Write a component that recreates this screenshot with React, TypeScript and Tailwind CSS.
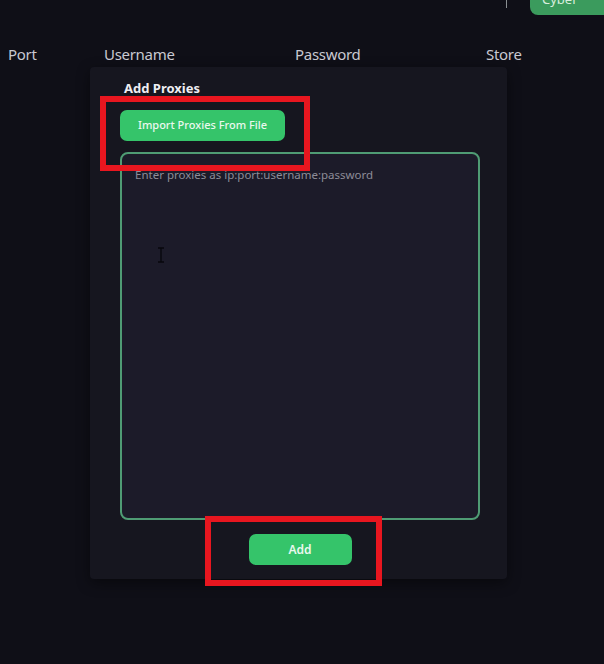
import { useState } from "react";

const font = { fontFamily: '"Noto Sans", "Open Sans", sans-serif' };

function Highlight({ className }: { className: string }) {
	return (
		<div
			className={`pointer-events-none absolute border-[6px] border-[#e8161f] ${className}`}
		/>
	);
}

export default function App() {
	const [proxies, setProxies] = useState("");

	return (
		<div
			className="relative h-[664px] w-[604px] overflow-hidden bg-[#0f0f17] text-[#c9c9d1]"
			style={font}
		>
			{/* top bar */}
			<div className="flex h-[16px] items-start">
				<div className="ml-[506px] h-[8px] w-px bg-[#8a8f92]" />
				<div className="ml-[23px] flex h-[15px] flex-1 items-start overflow-hidden rounded-bl-[8px] bg-[#3b9b5d] pl-[12px]">
					<span className="-mt-[8px] text-[13px] leading-[14px] text-[#d8eedd]">
						Cyber
					</span>
				</div>
			</div>

			{/* table header */}
			<div className="mt-[29px] flex h-[18px] items-center text-[15px] leading-none tracking-[-0.3px]">
				<div className="w-[104px] pl-[8px]">Port</div>
				<div className="w-[191px]">Username</div>
				<div className="w-[191px]">Password</div>
				<div>Store</div>
			</div>

			{/* modal */}
			<div className="ml-[90px] mt-[4px] w-[417px] rounded-[4px] bg-[#16161f] pb-[14px] pl-[30px] pr-[27px] pt-[12px] shadow-[0_4px_14px_rgba(0,0,0,0.45)]">
				<h2 className="pl-[4px] text-[13px] font-bold leading-[18px] text-[#eeeef2]">
					Add Proxies
				</h2>
				<button
					type="button"
					className="mt-[13px] h-[31px] w-[165px] rounded-[7px] bg-[#35c46a] text-[11px] font-medium text-[#eaf8ee]"
				>
					Import Proxies From File
				</button>
				<div className="relative mt-[11px]">
					<textarea
						value={proxies}
						onChange={(e) => setProxies(e.target.value)}
						placeholder="Enter proxies as ip:port:username:password"
						className="block h-[368px] w-[360px] resize-none rounded-[8px] border-2 border-[#4f9c74] bg-[#1c1b29] px-[13px] py-[13px] text-[11.5px] leading-[16px] text-[#d0d0d8] outline-none placeholder:text-[#8d8c98]"
					/>
					<svg
						className="pointer-events-none absolute left-[37px] top-[95px]"
						width="8"
						height="16"
						viewBox="0 0 8 16"
					>
						<path
							d="M1 1h6M1 15h6M4 1v14"
							stroke="#07070c"
							strokeWidth="1.3"
							fill="none"
						/>
					</svg>
				</div>
				<div className="mt-[14px] flex w-[360px] justify-center">
					<button
						type="button"
						className="h-[31px] w-[103px] rounded-[7px] bg-[#35c46a] text-[12px] font-semibold text-[#eaf8ee]"
					>
						Add
					</button>
				</div>
			</div>

			<Highlight className="left-[100px] top-[96px] h-[75px] w-[210px]" />
			<Highlight className="left-[205px] top-[516px] h-[70px] w-[177px]" />
		</div>
	);
}
